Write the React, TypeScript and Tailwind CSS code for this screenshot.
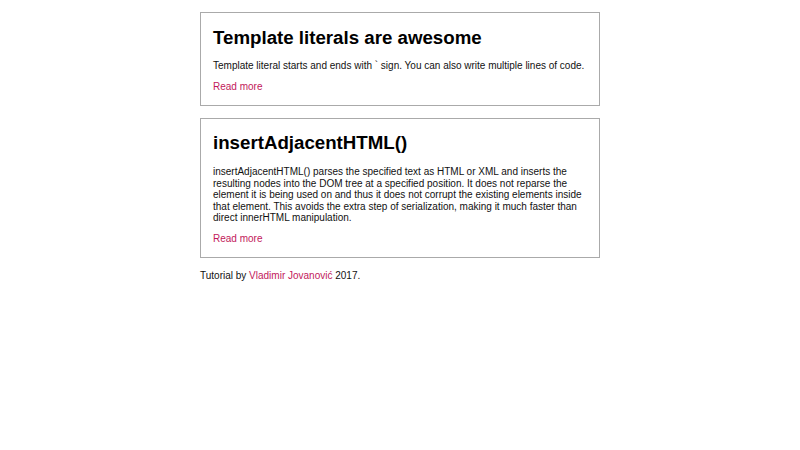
export default function App() {
  const posts = [
    {
      title: "Template literals are awesome",
      body: "Template literal starts and ends with ` sign. You can also write multiple lines of code.",
    },
    {
      title: "insertAdjacentHTML()",
      body: "insertAdjacentHTML() parses the specified text as HTML or XML and inserts the resulting nodes into the DOM tree at a specified position. It does not reparse the element it is being used on and thus it does not corrupt the existing elements inside that element. This avoids the extra step of serialization, making it much faster than direct innerHTML manipulation.",
    },
  ];

  return (
    <div className="min-h-screen bg-white text-[#111]" style={{ fontFamily: '"Liberation Sans", Arial, sans-serif' }}>
      <div className="w-[400px] mx-auto pt-3 flex flex-col gap-3">
        {posts.map((p) => (
          <div key={p.title} className="border border-[#aaaaaa] px-3 pt-[13.5px] pb-[12.5px]">
            <h1 className="text-[18.7px] font-bold leading-[21.8px] text-black">{p.title}</h1>
            <p className="text-[10px] leading-[11.5px] mt-3">{p.body}</p>
            <a href="#" className="block text-[10px] leading-[11.5px] text-[#c2185b] mt-[9px]">
              Read more
            </a>
          </div>
        ))}
        <p className="text-[10px] leading-[11.5px]">
          Tutorial by <a href="#" className="text-[#c2185b]">Vladimir Jovanović</a> 2017.
        </p>
      </div>
    </div>
  );
}
